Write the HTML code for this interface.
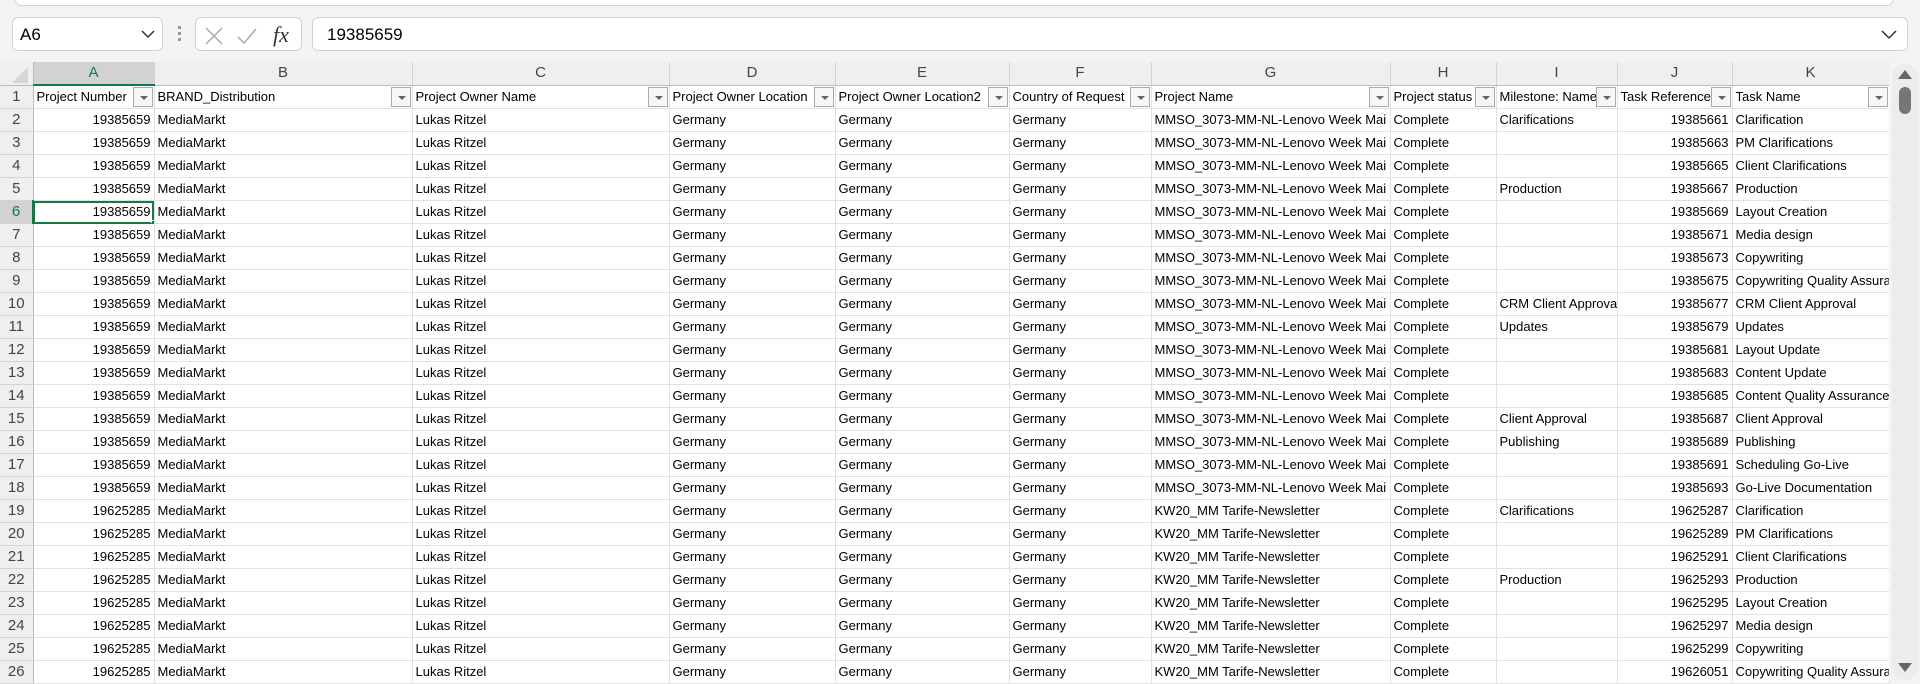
<!DOCTYPE html>
<html><head><meta charset="utf-8"><style>
*{box-sizing:border-box;margin:0;padding:0}
body{width:1920px;height:680px;overflow:hidden;background:#f3f3f3;font-family:"Liberation Sans",sans-serif;position:relative}
.topbar{position:absolute;left:14px;top:-20px;width:1880px;height:26px;background:#fff;border:1px solid #d4d4d4;border-radius:8px}
.box{position:absolute;background:#fff;border:1px solid #d2d2d2;border-radius:6px}
#grid{position:absolute;left:0;top:62px;width:1889px;border-collapse:collapse;table-layout:fixed;background:#fff}
#grid td{height:23px;border-right:1px solid #e1e1e1;border-bottom:1px solid #e1e1e1;font-size:13px;white-space:nowrap;overflow:hidden;padding:0 3px;color:#000;line-height:22px}
#grid tr.ch td{background:#efefef;text-align:center;color:#444;font-size:15px;border-right:1px solid #d4d4d4;border-bottom:1px solid #bdbdbd}
#grid td.rh{background:#efefef;color:#444;text-align:center;font-size:15px;padding:0;border-right:1px solid #bdbdbd;border-bottom:1px solid #d4d4d4}
#grid td.n{text-align:right}
.h{position:relative}
.fb{position:absolute;right:1px;top:1px;width:20px;height:20px;border:1px solid #aaa;background:#f6f6f6}
.fb:after{content:"";position:absolute;left:6px;top:8px;border-left:4px solid transparent;border-right:4px solid transparent;border-top:4px solid #666}
</style></head><body>
<div class="topbar"></div>
<div class="box" style="left:12px;top:17px;width:151px;height:34px"><span style="position:absolute;left:7px;top:7px;font-size:17px">A6</span>
<svg style="position:absolute;left:128px;top:11px" width="14" height="10"><path d="M1 2 L7 8 L13 2" fill="none" stroke="#333" stroke-width="1.5"/></svg></div>
<div style="position:absolute;left:178px;top:26px;width:3px;height:3px;background:#999;box-shadow:0 6px 0 #999,0 12px 0 #999"></div>
<div class="box" style="left:195px;top:17px;width:107px;height:34px">
<svg style="position:absolute;left:8px;top:8px" width="60" height="20"><path d="M2 2 L18 18 M18 2 L2 18" stroke="#aaa" stroke-width="1.5"/><path d="M34 11 L40 17 L52 3" fill="none" stroke="#aaa" stroke-width="1.5"/></svg>
<span style="position:absolute;left:77px;top:4px;font-family:'Liberation Serif',serif;font-style:italic;font-size:22px;color:#333">fx</span></div>
<div class="box" style="left:312px;top:17px;width:1596px;height:34px"><span style="position:absolute;left:14px;top:7px;font-size:17px">19385659</span>
<svg style="position:absolute;right:10px;top:12px" width="16" height="10"><path d="M1 1 L8 8 L15 1" fill="none" stroke="#333" stroke-width="1.5"/></svg></div>

<table id="grid">
<colgroup><col style="width:33px"><col style="width:121px"><col style="width:258px"><col style="width:257px"><col style="width:166px"><col style="width:174px"><col style="width:142px"><col style="width:239px"><col style="width:106px"><col style="width:121px"><col style="width:115px"><col style="width:157px"></colgroup>
<tr class="ch"><td style="background:#efefef;border-right:1px solid #bdbdbd;padding:0;position:relative"><svg width="30" height="20" style="position:absolute;left:0;top:2px"><path d="M28 3 L28 19 L12 19 Z" fill="#d6d6d6"/></svg></td><td style="background:#d2d2d2;color:#107c41;border-bottom:2px solid #107c41">A</td><td>B</td><td>C</td><td>D</td><td>E</td><td>F</td><td>G</td><td>H</td><td>I</td><td>J</td><td>K</td></tr>
<tr><td class="rh">1</td><td class="h">Project Number<span class="fb"></span></td><td class="h">BRAND_Distribution<span class="fb"></span></td><td class="h">Project Owner Name<span class="fb"></span></td><td class="h">Project Owner Location<span class="fb"></span></td><td class="h">Project Owner Location2<span class="fb"></span></td><td class="h">Country of Request<span class="fb"></span></td><td class="h">Project Name<span class="fb"></span></td><td class="h">Project status<span class="fb"></span></td><td class="h">Milestone: Name<span class="fb"></span></td><td class="h">Task Reference<span class="fb"></span></td><td class="h">Task Name<span class="fb"></span></td></tr>
<tr><td class="rh">2</td><td class="n">19385659</td><td>MediaMarkt</td><td>Lukas Ritzel</td><td>Germany</td><td>Germany</td><td>Germany</td><td>MMSO_3073-MM-NL-Lenovo Week Mai</td><td>Complete</td><td>Clarifications</td><td class="n">19385661</td><td>Clarification</td></tr>
<tr><td class="rh">3</td><td class="n">19385659</td><td>MediaMarkt</td><td>Lukas Ritzel</td><td>Germany</td><td>Germany</td><td>Germany</td><td>MMSO_3073-MM-NL-Lenovo Week Mai</td><td>Complete</td><td></td><td class="n">19385663</td><td>PM Clarifications</td></tr>
<tr><td class="rh">4</td><td class="n">19385659</td><td>MediaMarkt</td><td>Lukas Ritzel</td><td>Germany</td><td>Germany</td><td>Germany</td><td>MMSO_3073-MM-NL-Lenovo Week Mai</td><td>Complete</td><td></td><td class="n">19385665</td><td>Client Clarifications</td></tr>
<tr><td class="rh">5</td><td class="n">19385659</td><td>MediaMarkt</td><td>Lukas Ritzel</td><td>Germany</td><td>Germany</td><td>Germany</td><td>MMSO_3073-MM-NL-Lenovo Week Mai</td><td>Complete</td><td>Production</td><td class="n">19385667</td><td>Production</td></tr>
<tr><td class="rh" style="background:#d2d2d2;color:#107c41;border-right:2px solid #107c41">6</td><td class="n" style="outline:2px solid #107c41;outline-offset:-2px;position:relative">19385659<span style="position:absolute;right:-3px;bottom:-3px;width:6px;height:6px;background:#107c41;border:1px solid #fff"></span></td><td>MediaMarkt</td><td>Lukas Ritzel</td><td>Germany</td><td>Germany</td><td>Germany</td><td>MMSO_3073-MM-NL-Lenovo Week Mai</td><td>Complete</td><td></td><td class="n">19385669</td><td>Layout Creation</td></tr>
<tr><td class="rh">7</td><td class="n">19385659</td><td>MediaMarkt</td><td>Lukas Ritzel</td><td>Germany</td><td>Germany</td><td>Germany</td><td>MMSO_3073-MM-NL-Lenovo Week Mai</td><td>Complete</td><td></td><td class="n">19385671</td><td>Media design</td></tr>
<tr><td class="rh">8</td><td class="n">19385659</td><td>MediaMarkt</td><td>Lukas Ritzel</td><td>Germany</td><td>Germany</td><td>Germany</td><td>MMSO_3073-MM-NL-Lenovo Week Mai</td><td>Complete</td><td></td><td class="n">19385673</td><td>Copywriting</td></tr>
<tr><td class="rh">9</td><td class="n">19385659</td><td>MediaMarkt</td><td>Lukas Ritzel</td><td>Germany</td><td>Germany</td><td>Germany</td><td>MMSO_3073-MM-NL-Lenovo Week Mai</td><td>Complete</td><td></td><td class="n">19385675</td><td>Copywriting Quality Assurance</td></tr>
<tr><td class="rh">10</td><td class="n">19385659</td><td>MediaMarkt</td><td>Lukas Ritzel</td><td>Germany</td><td>Germany</td><td>Germany</td><td>MMSO_3073-MM-NL-Lenovo Week Mai</td><td>Complete</td><td>CRM Client Approval</td><td class="n">19385677</td><td>CRM Client Approval</td></tr>
<tr><td class="rh">11</td><td class="n">19385659</td><td>MediaMarkt</td><td>Lukas Ritzel</td><td>Germany</td><td>Germany</td><td>Germany</td><td>MMSO_3073-MM-NL-Lenovo Week Mai</td><td>Complete</td><td>Updates</td><td class="n">19385679</td><td>Updates</td></tr>
<tr><td class="rh">12</td><td class="n">19385659</td><td>MediaMarkt</td><td>Lukas Ritzel</td><td>Germany</td><td>Germany</td><td>Germany</td><td>MMSO_3073-MM-NL-Lenovo Week Mai</td><td>Complete</td><td></td><td class="n">19385681</td><td>Layout Update</td></tr>
<tr><td class="rh">13</td><td class="n">19385659</td><td>MediaMarkt</td><td>Lukas Ritzel</td><td>Germany</td><td>Germany</td><td>Germany</td><td>MMSO_3073-MM-NL-Lenovo Week Mai</td><td>Complete</td><td></td><td class="n">19385683</td><td>Content Update</td></tr>
<tr><td class="rh">14</td><td class="n">19385659</td><td>MediaMarkt</td><td>Lukas Ritzel</td><td>Germany</td><td>Germany</td><td>Germany</td><td>MMSO_3073-MM-NL-Lenovo Week Mai</td><td>Complete</td><td></td><td class="n">19385685</td><td>Content Quality Assurance</td></tr>
<tr><td class="rh">15</td><td class="n">19385659</td><td>MediaMarkt</td><td>Lukas Ritzel</td><td>Germany</td><td>Germany</td><td>Germany</td><td>MMSO_3073-MM-NL-Lenovo Week Mai</td><td>Complete</td><td>Client Approval</td><td class="n">19385687</td><td>Client Approval</td></tr>
<tr><td class="rh">16</td><td class="n">19385659</td><td>MediaMarkt</td><td>Lukas Ritzel</td><td>Germany</td><td>Germany</td><td>Germany</td><td>MMSO_3073-MM-NL-Lenovo Week Mai</td><td>Complete</td><td>Publishing</td><td class="n">19385689</td><td>Publishing</td></tr>
<tr><td class="rh">17</td><td class="n">19385659</td><td>MediaMarkt</td><td>Lukas Ritzel</td><td>Germany</td><td>Germany</td><td>Germany</td><td>MMSO_3073-MM-NL-Lenovo Week Mai</td><td>Complete</td><td></td><td class="n">19385691</td><td>Scheduling Go-Live</td></tr>
<tr><td class="rh">18</td><td class="n">19385659</td><td>MediaMarkt</td><td>Lukas Ritzel</td><td>Germany</td><td>Germany</td><td>Germany</td><td>MMSO_3073-MM-NL-Lenovo Week Mai</td><td>Complete</td><td></td><td class="n">19385693</td><td>Go-Live Documentation</td></tr>
<tr><td class="rh">19</td><td class="n">19625285</td><td>MediaMarkt</td><td>Lukas Ritzel</td><td>Germany</td><td>Germany</td><td>Germany</td><td>KW20_MM Tarife-Newsletter</td><td>Complete</td><td>Clarifications</td><td class="n">19625287</td><td>Clarification</td></tr>
<tr><td class="rh">20</td><td class="n">19625285</td><td>MediaMarkt</td><td>Lukas Ritzel</td><td>Germany</td><td>Germany</td><td>Germany</td><td>KW20_MM Tarife-Newsletter</td><td>Complete</td><td></td><td class="n">19625289</td><td>PM Clarifications</td></tr>
<tr><td class="rh">21</td><td class="n">19625285</td><td>MediaMarkt</td><td>Lukas Ritzel</td><td>Germany</td><td>Germany</td><td>Germany</td><td>KW20_MM Tarife-Newsletter</td><td>Complete</td><td></td><td class="n">19625291</td><td>Client Clarifications</td></tr>
<tr><td class="rh">22</td><td class="n">19625285</td><td>MediaMarkt</td><td>Lukas Ritzel</td><td>Germany</td><td>Germany</td><td>Germany</td><td>KW20_MM Tarife-Newsletter</td><td>Complete</td><td>Production</td><td class="n">19625293</td><td>Production</td></tr>
<tr><td class="rh">23</td><td class="n">19625285</td><td>MediaMarkt</td><td>Lukas Ritzel</td><td>Germany</td><td>Germany</td><td>Germany</td><td>KW20_MM Tarife-Newsletter</td><td>Complete</td><td></td><td class="n">19625295</td><td>Layout Creation</td></tr>
<tr><td class="rh">24</td><td class="n">19625285</td><td>MediaMarkt</td><td>Lukas Ritzel</td><td>Germany</td><td>Germany</td><td>Germany</td><td>KW20_MM Tarife-Newsletter</td><td>Complete</td><td></td><td class="n">19625297</td><td>Media design</td></tr>
<tr><td class="rh">25</td><td class="n">19625285</td><td>MediaMarkt</td><td>Lukas Ritzel</td><td>Germany</td><td>Germany</td><td>Germany</td><td>KW20_MM Tarife-Newsletter</td><td>Complete</td><td></td><td class="n">19625299</td><td>Copywriting</td></tr>
<tr><td class="rh">26</td><td class="n">19625285</td><td>MediaMarkt</td><td>Lukas Ritzel</td><td>Germany</td><td>Germany</td><td>Germany</td><td>KW20_MM Tarife-Newsletter</td><td>Complete</td><td></td><td class="n">19626051</td><td>Copywriting Quality Assurance</td></tr>
</table>
<div style="position:absolute;left:1889px;top:62px;width:31px;height:618px;background:#f3f3f3"></div>
<div style="position:absolute;left:1892px;top:64px;width:26px;height:616px;background:#ececec;border-radius:12px"></div>
<svg style="position:absolute;left:1897px;top:68px" width="16" height="12"><path d="M1 11 L8 2 L15 11 Z" fill="#666"/></svg>
<div style="position:absolute;left:1899px;top:87px;width:12px;height:27px;background:#767676;border-radius:6px"></div>
<svg style="position:absolute;left:1897px;top:662px" width="16" height="12"><path d="M1 1 L8 10 L15 1 Z" fill="#666"/></svg>
</body></html>
